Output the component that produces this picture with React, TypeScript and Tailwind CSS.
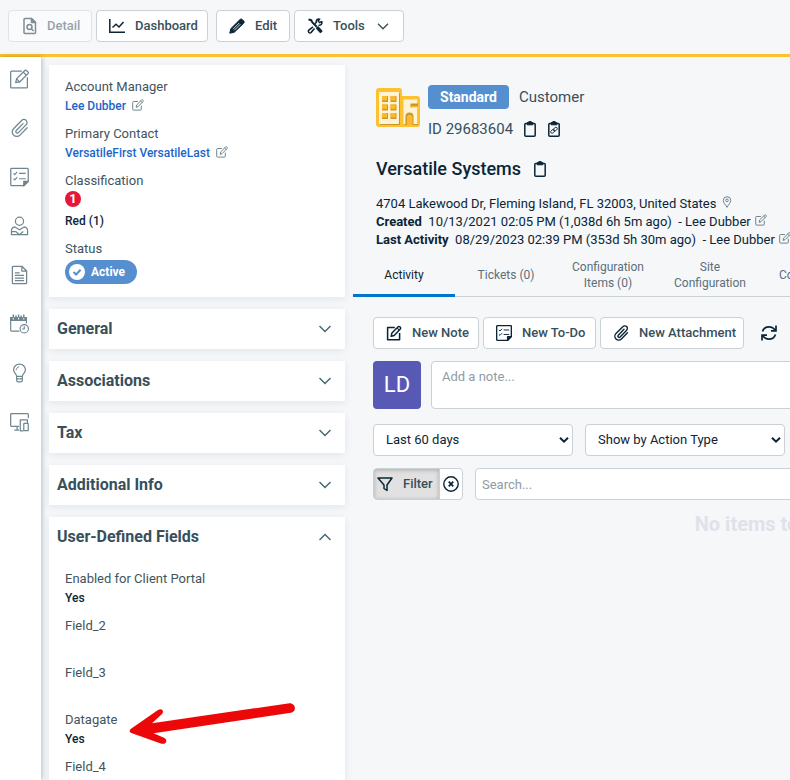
import React from 'react';

interface IconProps {
  className?: string;
}

const EditIcon: React.FC<IconProps> = ({ className = 'w-5 h-5' }) => (
  <svg viewBox="0 0 20 20" fill="none" stroke="currentColor" strokeWidth="1.3" strokeLinejoin="round" strokeLinecap="round" className={className} aria-hidden="true">
    <path d="M12 1.7H1.7a1 1 0 0 0-1 1v15.6a1 1 0 0 0 1 1h15.6a1 1 0 0 0 1-1V8.5" />
    <path d="M6 13.8l.9-4L15.6 1a1.2 1.2 0 0 1 1.7 0L19 2.7a1.2 1.2 0 0 1 0 1.7l-8.9 8.7z" />
    <path d="M14 2.8l3.2 3.2M6.9 9.8l3.2 3.3" />
  </svg>
);

const SmallEditIcon: React.FC = () => (
  <svg viewBox="0 0 12 12" fill="none" stroke="#6f858f" strokeLinejoin="round" strokeLinecap="round" className="w-3 h-3 mb-1 shrink-0" aria-hidden="true">
    <path d="M5.500 2.500H1.500a.8.8 0 0 0-.8.800v7a.8.8 0 0 0 .8.800h7a.8.8 0 0 0 .8-.8V7" />
    <path d="M4.200 8l.5-2.100L9.600 1a.9.9 0 0 1 1.300 0l.2.2a.9.9 0 0 1 0 1.300L6.300 7.400z" />
    <path d="M8.600 2l1.500 1.500" />
  </svg>
);

const NoteIcon: React.FC<IconProps> = ({ className }) => (
  <svg viewBox="0 0 20 20" fill="none" stroke="#0b2536" strokeWidth="1.9" strokeLinejoin="round" className={className} aria-hidden="true">
    <path d="M11 3H2v15.5h15V10" />
    <path d="M6.5 14l.9-4L15.2 2.2a1.4 1.4 0 0 1 2 0l.7.7a1.4 1.4 0 0 1 0 2L10.2 13z" />
    <path d="M13.8 3.6l2.8 2.8" strokeWidth="1.3" />
  </svg>
);

const ClipIcon: React.FC<IconProps & { weight?: number }> = ({ className = 'w-5 h-5', weight = 1.6 }) => (
  <svg viewBox="0 0 24 24" fill="none" stroke="currentColor" strokeWidth={weight} strokeLinecap="round" strokeLinejoin="round" className={className} aria-hidden="true">
    <path d="M16.500 6.500l-8.600 8.700a1.900 1.900 0 0 0 2.700 2.700l9.600-9.800a3.900 3.900 0 1 0-5.500-5.500L4.500 12.900a5.700 5.700 0 1 0 8.100 8.100L21.700 11.700" />
  </svg>
);

const TodoIcon: React.FC<IconProps & { weight?: number }> = ({ className = 'w-5 h-5', weight = 1.3 }) => (
  <svg viewBox="0 0 20 20" fill="none" stroke="currentColor" strokeWidth={weight} strokeLinejoin="round" className={className} aria-hidden="true">
    <path d="M14.500 19.200H1.800a1 1 0 0 1-1-1V1.800a1 1 0 0 1 1-1h16.400a1 1 0 0 1 1 1v12.700z" />
    <path d="M14.500 19.200v-4.700h4.700z" fill="currentColor" />
    <path d="M3.700 6.200L5 7.500l2.600-2.800M3.700 11.700L5 13l2.600-2.800M9.500 6.200h7M9.500 11.800h7" strokeWidth="1.200" />
  </svg>
);

const ContactIcon: React.FC<IconProps> = ({ className = 'w-5 h-5' }) => (
  <svg viewBox="0 0 20 20" fill="none" stroke="currentColor" strokeWidth="1.3" strokeLinejoin="round" className={className} aria-hidden="true">
    <circle cx="10" cy="5" r="4.300" />
    <path d="M1.500 19.200v-4c0-2.200 1.300-3.800 3.700-4.200L10 14l4.800-3c2.400.4 3.700 2 3.700 4.200v4zM1.500 15.800h4.500l4 3.400 4-3.400" />
  </svg>
);

const DocIcon: React.FC<IconProps> = ({ className = 'w-5 h-5' }) => (
  <svg viewBox="0 0 20 20" fill="none" stroke="currentColor" strokeWidth="1.3" strokeLinejoin="round" className={className} aria-hidden="true">
    <path d="M12.500.800H3.500a1 1 0 0 0-1 1v16.400a1 1 0 0 0 1 1h13a1 1 0 0 0 1-1V5.800zM12.500.800v5h5" />
    <path d="M5.200 7.800h5M5.200 10.500h9.600M5.200 13.200h9.600M5.200 15.900h9.600" />
  </svg>
);

const CalendarIcon: React.FC<IconProps> = ({ className = 'w-5 h-5' }) => (
  <svg viewBox="0 0 20 20" fill="none" stroke="currentColor" strokeWidth="1.2" strokeLinejoin="round" className={className} aria-hidden="true">
    <path d="M10 17.500H1.500a.8.8 0 0 1-.8-.8V3.500h16.600v6" />
    <path d="M.7 3.200h16.600v3H.7z" fill="currentColor" />
    <path d="M3.500 0v3M6.300 1v2M9 0v3M11.700 1v2M14.500 0v3" strokeWidth="1.500" />
    <path d="M3.500 3.500v1.800M9 3.500v1.800M14.500 3.500v1.800" stroke="white" strokeWidth="1" />
    <circle cx="15" cy="15" r="4.400" />
    <path d="M15 12.300V15.300h-2.300" />
  </svg>
);

const BulbIcon: React.FC<IconProps> = ({ className = 'w-5 h-5' }) => (
  <svg viewBox="0 0 20 20" fill="none" stroke="currentColor" strokeWidth="1.3" strokeLinejoin="round" strokeLinecap="round" className={className} aria-hidden="true">
    <path d="M7 13.500c0-2.300-3.200-3.700-3.200-7a6.200 5.800 0 0 1 12.400 0c0 3.300-3.200 4.700-3.200 7zM7 13.500v4c0 1.200.7 1.800 1.800 1.800h2.400c1.100 0 1.800-.6 1.800-1.800v-4M7 16.200h6" />
    <path d="M6.500 6.700C6.600 5 7.700 3.800 9.300 3.500" strokeWidth="1" />
  </svg>
);

const DevicesIcon: React.FC<IconProps> = ({ className = 'w-5 h-5' }) => (
  <svg viewBox="0 0 20 20" fill="none" stroke="currentColor" strokeWidth="1.3" strokeLinejoin="round" className={className} aria-hidden="true">
    <path d="M9.500 14.500H1.500a.8.8 0 0 1-.8-.8V2a.8.8 0 0 1 .8-.8h17a.8.8 0 0 1 .8.800v4M7.500 14.500v3.800M4.500 18.600H9.500" />
    <path d="M14 19.300h-3.200V7.800h7.500v3.200" />
    <rect x="14.500" y="11.500" width="4.700" height="7.700" rx=".6" />
  </svg>
);

const ClipboardIcon: React.FC<{ linked?: boolean }> = ({ linked }) => (
  <svg viewBox="0 0 14 16" fill="none" stroke="#0b2536" strokeWidth="1.500" strokeLinejoin="round" className="w-3.5 h-4" aria-hidden="true">
    <rect x="1.800" y="2.600" width="10.400" height="12.600" rx="1" />
    <path d="M4.200 1.600h1.300a1.500 1.500 0 0 1 3 0h1.300v2.200H4.200z" fill="#0b2536" strokeWidth="1" />
    {linked && (
      <g strokeWidth=".8">
        <ellipse cx="5.700" cy="10.300" rx="2.300" ry="1.500" transform="rotate(-40 5.700 10.300)" />
        <ellipse cx="8.300" cy="8.200" rx="2.300" ry="1.500" transform="rotate(-40 8.300 8.200)" />
      </g>
    )}
  </svg>
);

const Chevron: React.FC<{ up?: boolean }> = ({ up }) => (
  <svg viewBox="0 0 12 8" fill="none" stroke="#456573" strokeWidth="1.400" className="w-3 h-2" aria-hidden="true">
    <path d={up ? 'M.5 7L6 1.500 11.500 7' : 'M.5 1L6 6.500 11.500 1'} />
  </svg>
);

const BuildingIcon: React.FC = () => (
  <svg viewBox="0 0 44 39" className="w-11 h-[39px] shrink-0" aria-hidden="true">
    <path d="M3 0h20a3 3 0 0 1 3 3v5h15a3 3 0 0 1 3 3v25a3 3 0 0 1-3 3H3a3 3 0 0 1-3-3V3a3 3 0 0 1 3-3z" fill="#fdc02f" />
    <rect x="4" y="5" width="20" height="32" rx="1" fill="#c9972a" />
    <rect x="3" y="4" width="20" height="32" rx="1" fill="#fff3d6" />
    <path d="M28.500 12.500H42v5.500h-6.500v3H42V37H28.500z" fill="#c9972a" />
    <path d="M27.500 11.500H41.500v4H34.500v4h7V36H27.500z" fill="#fff3d6" />
    <path d="M6 8h6v6H6zM14.500 8h6v6h-6zM6 16.500h6v6H6zM14.500 16.500h6v6h-6zM6 25h6v6H6zM14.500 25h6v6h-6zM29.500 37V28.500a4 4 0 0 1 8 0V37z" fill="#c9972a" />
    <path d="M6 8h5v4.500H6zM14.500 8h5v4.500h-5zM6 16.500h5v4.500H6zM14.500 16.500h5v4.500h-5zM6 25h5v4.500H6zM14.500 25h5v4.500h-5zM31 37v-8a2.800 2.800 0 0 1 5.500 0v8z" fill="#fdb92a" />
  </svg>
);

const navItems = [
  { label: 'Notes', icon: <EditIcon /> },
  { label: 'Attachments', icon: <ClipIcon /> },
  { label: 'To-Dos', icon: <TodoIcon /> },
  { label: 'Contacts', icon: <ContactIcon /> },
  { label: 'Documents', icon: <DocIcon /> },
  { label: 'Calendar', icon: <CalendarIcon /> },
  { label: 'Opportunities', icon: <BulbIcon /> },
  { label: 'Devices', icon: <DevicesIcon /> },
];

const tabs = ['Activity', 'Tickets (0)', 'Configuration Items (0)', 'Site Configuration', 'Contacts (0)'];

const buttonClass =
  'flex items-center h-8 rounded border border-[#c9d1d5] bg-white text-[13px] leading-4 font-medium text-[#37505c] whitespace-nowrap shrink-0';

const Field: React.FC<{ label: string; children?: React.ReactNode }> = ({ label, children }) => (
  <div className="mb-[7px] text-[13px] leading-[19px]">
    <div className="text-[#42545c]">{label}</div>
    <div className="min-h-[21px] text-xs leading-[21px] font-medium text-[#0b2536]">{children}</div>
  </div>
);

const PersonLink: React.FC<{ name: string }> = ({ name }) => (
  <span className="flex items-center gap-1.5">
    <a href="#" className="text-[#1a67c9]">{name}</a>
    <SmallEditIcon />
  </span>
);

const Section: React.FC<{ title: string; open?: boolean; children?: React.ReactNode }> = ({ title, open, children }) => (
  <section className="bg-white shadow-[0_2px_8px_rgba(30,50,60,0.08)]">
    <button type="button" aria-expanded={!!open} className="flex items-center justify-between w-full h-10 pl-2 pr-3.5 text-base font-bold text-[#37505c]">
      {title}
      <Chevron up={open} />
    </button>
    {open && <div className="px-4 pt-3">{children}</div>}
  </section>
);

const Dropdown: React.FC<{ label: string; value: string }> = ({ label, value }) => (
  <div className="relative w-[200px] shrink-0">
    <select aria-label={label} className="appearance-none w-full h-8 pl-3 pr-8 rounded border border-[#c9d1d5] bg-white text-[13px] text-[#0b2536]">
      <option>{value}</option>
    </select>
    <svg viewBox="0 0 10 7" fill="none" stroke="#0b2536" strokeWidth="2" className="absolute right-1 top-3 w-2.5 h-2 pointer-events-none" aria-hidden="true">
      <path d="M1 1.200l4 4 4-4" />
    </svg>
  </div>
);

export default function App() {
  return (
    <div className="flex flex-col h-screen overflow-hidden bg-[#f5f7f9] text-[#0b2536] font-['Roboto',sans-serif]">
      <header className="flex shrink-0 h-[57px] px-2 pt-2.5 border-b-3 border-[#fcc12e]">
        <button type="button" disabled className={`${buttonClass} w-[84px] pl-3 opacity-50`}>
          <svg viewBox="0 0 18 18" fill="none" stroke="#0b2536" strokeWidth="1.500" strokeLinejoin="round" className="w-[18px] h-[18px] mr-2" aria-hidden="true">
            <path d="M10.500 1.500H4a1 1 0 0 0-1 1v13a1 1 0 0 0 1 1h9.500a1 1 0 0 0 1-1V5.500z" />
            <path d="M10.500 1.500v4h4z" fill="#0b2536" />
            <circle cx="8.500" cy="10" r="2.500" />
            <path d="M10.300 11.800l2.200 2.200" />
          </svg>
          Detail
        </button>
        <button type="button" className={`${buttonClass} w-28 ml-1 pl-3`}>
          <svg viewBox="0 0 16 16" fill="none" stroke="#0b2536" strokeWidth="1.500" className="w-4 h-4 mr-2.5" aria-hidden="true">
            <path d="M.8 1v13.300H16M3.500 9.500l3.500-3.200 3 2.700 4.500-5" />
          </svg>
          Dashboard
        </button>
        <button type="button" className={`${buttonClass} w-[74px] ml-2 pl-3`}>
          <svg viewBox="0 0 16 16" fill="none" stroke="#0b2536" className="w-4 h-4 mr-2.5" aria-hidden="true">
            <path d="M.8 15.200l1-4.500L11 1.500a1.500 1.500 0 0 1 2.200 0l1.500 1.500a1.500 1.500 0 0 1 0 2.200L5.300 14.200z" fill="#0b2536" strokeLinejoin="round" />
            <path d="M4 11.200l6.200-6.200M5.200 12.400l6.200-6.200" stroke="white" strokeWidth=".8" />
          </svg>
          Edit
        </button>
        <button type="button" className={`${buttonClass} w-[110px] ml-1 pl-3`}>
          <svg viewBox="0 0 16 16" fill="none" stroke="#0b2536" className="w-4 h-4 mr-2.5" aria-hidden="true">
            <path d="M1.500 1.500l2.700.7 1 2 4.500 4.600" strokeWidth="2" />
            <path d="M9.800 10.200l3.600 4 1.200-1.200-3.600-3.800z" fill="#0b2536" strokeWidth="1.800" strokeLinejoin="round" />
            <path d="M14.800 3.300l-2.100 1.300-1.500-1.400 1.300-2C10.500.600 9 2 9.300 4.200L8 5.800M6 8.800l-4.400 3.500a1.700 1.700 0 0 0 2.400 2.300l3.500-4.200M11.500 7.200c2.200.4 4-1.200 3.300-3.900" strokeWidth="1.500" />
          </svg>
          Tools
          <svg viewBox="0 0 12 7" fill="none" stroke="#37505c" strokeWidth="1.300" className="w-3 h-[7px] ml-auto mr-3.5" aria-hidden="true">
            <path d="M1 .8l5 5 5-5" />
          </svg>
        </button>
      </header>

      <div className="flex flex-1 min-h-0">
        <nav className="flex flex-col gap-[30px] w-[41px] shrink-0 pt-3 pl-2.5 bg-white text-[#6f858f] shadow-[1px_0_5px_rgba(30,50,60,0.3)]">
          {navItems.map((item) => (
            <a key={item.label} href="#" aria-label={item.label} className="flex w-[19px] h-[19px]">
              {item.icon}
            </a>
          ))}
        </nav>

        <aside className="flex flex-col gap-3 w-[296px] shrink-0 mx-2 pt-2">
          <section className="px-4 pt-3 pb-[13px] bg-white shadow-[0_2px_8px_rgba(30,50,60,0.08)]">
            <Field label="Account Manager">
              <PersonLink name="Lee Dubber" />
            </Field>
            <Field label="Primary Contact">
              <PersonLink name="VersatileFirst VersatileLast" />
            </Field>
            <Field label="Classification">
              <span className="flex items-center justify-center w-4 h-4 mt-px mb-1 rounded-full bg-[#e51937] text-[13px] leading-4 font-bold text-white">1</span>
              Red (1)
            </Field>
            <div className="text-[13px] leading-[19px] text-[#42545c]">Status</div>
            <div className="inline-flex items-center gap-1.5 h-6 mt-0.5 pl-1 pr-3 rounded-full bg-[#568fcf] text-xs font-bold text-white align-top">
              <svg viewBox="0 0 16 16" className="w-4 h-4" aria-hidden="true">
                <circle cx="8" cy="8" r="8" fill="white" />
                <path d="M4.500 8l2.600 2.500 4.500-4.700" fill="none" stroke="#568fcf" strokeWidth="2" />
              </svg>
              Active
            </div>
          </section>

          <Section title="General" />
          <Section title="Associations" />
          <Section title="Tax" />
          <Section title="Additional Info" />
          <Section title="User-Defined Fields" open>
            <Field label="Enabled for Client Portal">Yes</Field>
            <Field label="Field_2" />
            <Field label="Field_3" />
            <div className="relative">
              <Field label="Datagate">Yes</Field>
              {/* callout arrow */}
              <svg viewBox="0 0 170 46" className="absolute left-16 -top-2 w-[170px] h-[46px] pointer-events-none" aria-hidden="true">
                <path d="M160.500 1.200c6 0 7.800 8 1.500 9.500L24.500 31.200l10.500 4.600c4.500 2.500 2 7-2.500 5.900L3 31.200c-3-1-3-3-1-4.500L29 8c4-2.500 6.500 1.500 4 4L23 21.300z" fill="#ec0808" />
              </svg>
            </div>
            <Field label="Field_4" />
          </Section>
        </aside>

        <main className="flex-1 min-w-0 overflow-hidden">
          <div className="min-w-[836px]">
            <div className="pl-[23px] pt-7">
              <div className="flex items-start">
                <div className="pt-[3px]">
                  <BuildingIcon />
                </div>
                <div className="ml-2">
                  <div className="flex items-center gap-2.5">
                    <span className="flex items-center justify-center w-[81px] h-6 rounded bg-[#568fcf] text-sm font-bold text-white">Standard</span>
                    <span className="text-[15px] leading-5 text-[#37505c]">Customer</span>
                  </div>
                  <div className="flex items-center gap-2.5 mt-2.5 text-[15px] leading-5 text-[#37505c]">
                    ID 29683604
                    <ClipboardIcon />
                    <ClipboardIcon linked />
                  </div>
                </div>
              </div>
              <div className="flex items-center gap-3 mt-4">
                <h1 className="text-lg leading-7 font-medium">Versatile Systems</h1>
                <ClipboardIcon />
              </div>
              <div className="mt-3 text-[13px] leading-[18px] whitespace-nowrap">
                <div className="flex items-center gap-1.5">
                  4704 Lakewood Dr, Fleming Island, FL 32003, United States
                  <svg viewBox="0 0 10 12" fill="none" stroke="#6f858f" className="w-2.5 h-3 mb-1" aria-hidden="true">
                    <path d="M5 11.300C3.500 8.500 1.300 7 1.300 4.400a3.700 3.700 0 0 1 7.400 0C8.700 7 6.500 8.500 5 11.300z" />
                    <circle cx="5" cy="4.400" r="1.300" />
                  </svg>
                </div>
                <div className="flex items-center gap-1">
                  <span><b>Created</b>&nbsp; 10/13/2021 02:05 PM (1,038d 6h 5m ago) &nbsp;- Lee Dubber</span>
                  <SmallEditIcon />
                </div>
                <div className="flex items-center gap-1">
                  <span><b>Last Activity</b>&nbsp; 08/29/2023 02:39 PM (353d 5h 30m ago) &nbsp;- Lee Dubber</span>
                  <SmallEditIcon />
                </div>
              </div>
            </div>

            <div role="tablist" className="flex h-12 border-b border-[#c9d1d5] text-xs text-[#5b707a]">
              {tabs.map((tab, i) => (
                <button
                  key={tab}
                  type="button"
                  role="tab"
                  aria-selected={i === 0}
                  className={`w-[102px] h-12 px-3 pt-1.5 shrink-0 leading-4 border-b-3 ${
                    i === 0 ? 'border-[#0077cc] text-[#0b2536]' : 'border-transparent'
                  }`}
                >
                  {tab}
                </button>
              ))}
            </div>

            <div className="pl-5 pt-5">
              <div className="flex items-center">
                <button type="button" className={`${buttonClass} w-[106px] pl-3`}>
                  <NoteIcon className="w-4 h-4 mr-2.5" />
                  New Note
                </button>
                <button type="button" className={`${buttonClass} w-[113px] ml-1 pl-3`}>
                  <TodoIcon className="w-4 h-4 mr-2.5 text-[#0b2536]" weight={1.7} />
                  New To-Do
                </button>
                <button type="button" className={`${buttonClass} w-36 ml-1 pl-3`}>
                  <ClipIcon className="w-4 h-4 mr-2.5 text-[#0b2536]" weight={2.1} />
                  New Attachment
                </button>
                <button type="button" aria-label="Refresh" className="ml-4">
                  <svg viewBox="0 0 18 18" fill="none" stroke="#0b2536" strokeWidth="1.700" className="w-[18px] h-[18px]" aria-hidden="true">
                    <path d="M2.500 7.500C3.500 4.500 6 2.800 9 2.800c2.600 0 4.700 1.200 6.300 3.700M16 1.500v5.300h-5M15.500 10.500c-1 3-3.500 4.700-6.500 4.700-2.600 0-4.700-1.200-6.300-3.700M2 16.500v-5.300h5" />
                  </svg>
                </button>
              </div>

              <div className="flex gap-2.5 mt-3">
                <div className="flex items-center justify-center w-12 h-12 rounded bg-[#5759b5] text-[22px] leading-8 text-white">LD</div>
                <textarea aria-label="Add a note" placeholder="Add a note..." className="flex-1 h-12 px-2.5 py-1.5 resize-none rounded border border-[#c9d1d5] bg-white text-[13px] leading-[18px] placeholder:text-[#8f9ca3]" />
              </div>

              <div className="flex gap-3 mt-[15px]">
                <Dropdown label="Date range" value="Last 60 days" />
                <Dropdown label="Activity view" value="Show by Action Type" />
              </div>

              <div className="flex gap-3 mt-3">
                <div className="flex w-[90px] h-8 shrink-0 rounded border border-[#c9d1d5] bg-white overflow-hidden">
                  <button type="button" aria-pressed="true" className="flex items-center w-[66px] pl-[3px] border-r border-[#c9d1d5] bg-[#e1e1e1] text-[13px] font-medium text-[#37505c] shadow-[inset_0_1px_4px_rgba(0,0,0,0.25)]">
                    <svg viewBox="0 0 16 16" fill="none" stroke="#0b2536" strokeWidth="1.500" strokeLinejoin="round" className="w-4 h-4 mr-2.5" aria-hidden="true">
                      <path d="M1 2h14l-5 7v5.500l-3-2V9z" />
                    </svg>
                    Filter
                  </button>
                  <button type="button" aria-label="Clear filter" className="flex items-center justify-center flex-1">
                    <svg viewBox="0 0 16 16" fill="none" stroke="#0b2536" strokeWidth="1.400" className="w-4 h-4" aria-hidden="true">
                      <circle cx="8" cy="8" r="7.200" />
                      <path d="M5.700 5.700l4.600 4.600M10.300 5.700l-4.600 4.600" strokeWidth="1.800" />
                    </svg>
                  </button>
                </div>
                <input type="text" aria-label="Search" placeholder="Search..." className="flex-1 h-8 px-1.5 rounded border border-[#c9d1d5] bg-white text-[13px] placeholder:text-[#8f9ca3]" />
              </div>

              <p className="mt-2.5 text-center text-xl leading-7 font-bold text-[#dfe2e9]">No items to display</p>
            </div>
          </div>
        </main>
      </div>
    </div>
  );
}
